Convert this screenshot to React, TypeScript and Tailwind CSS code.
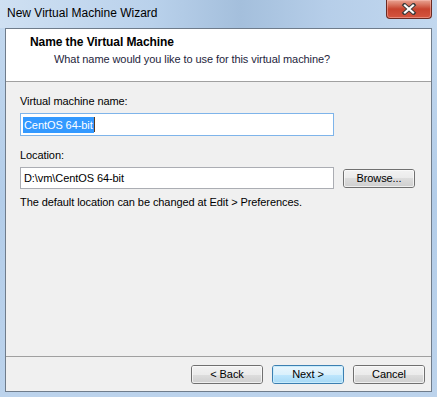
import React from "react";

const ui = { fontFamily: '"Liberation Sans", Arial, sans-serif' };

function WinButton({ label, focused }: { label: string; focused?: boolean }) {
  return (
    <div
      className={`relative w-[72px] h-[19px] rounded-[3px] border flex items-center justify-center text-[11px] text-black overflow-hidden ${
        focused ? "border-[#3c7fb1]" : "border-[#707070]"
      }`}
    >
      <div className="absolute inset-0 flex flex-col">
        <div className={`flex-1 ${focused ? "bg-gradient-to-b from-[#eaf6fd] to-[#d9f0fc]" : "bg-gradient-to-b from-[#f2f2f2] to-[#ebebeb]"}`} />
        <div className={`flex-1 ${focused ? "bg-gradient-to-b from-[#bee6fd] to-[#a7d9f5]" : "bg-gradient-to-b from-[#dddddd] to-[#cfcfcf]"}`} />
      </div>
      <div className={`absolute inset-0 rounded-[2px] border ${focused ? "border-[#c8ecfc]" : "border-[#fcfcfc]/70"}`} />
      <span className="relative">{label}</span>
    </div>
  );
}

function CloseButton() {
  return (
    <div className="w-[46px] h-[19px] rounded-b-[4px] border border-t-0 border-[#6b2a22] bg-gradient-to-b from-[#e8a493] via-[#c7432e] to-[#d5553f] flex items-center justify-center shadow-[inset_0_0_0_1px_rgba(255,200,190,0.45)]">
      <svg width="16" height="12" viewBox="0 0 16 12">
        <path d="M3.5 2 L12.5 10 M12.5 2 L3.5 10" stroke="#3b3b3b" strokeWidth="4" strokeLinecap="square" />
        <path d="M4 2.5 L12 9.5 M12 2.5 L4 9.5" stroke="#ffffff" strokeWidth="2.2" strokeLinecap="square" />
      </svg>
    </div>
  );
}

export default function App() {
  return (
    <div
      className="w-[437px] h-[397px] flex flex-col bg-gradient-to-b from-[#c4d9ef] via-[#b3cde9] to-[#bcd3ec]"
      style={ui}
    >
      {/* title bar */}
      <div className="h-[28px] flex items-start bg-[linear-gradient(90deg,#cfe0f2_0%,#b9d1eb_35%,#a4bfdc_55%,#b6cee9_75%,#c2d8ef_100%)]">
        <span className="pl-[7px] pt-[4px] text-[12px] text-black">New Virtual Machine Wizard</span>
        <div className="ml-auto mr-[5px]">
          <CloseButton />
        </div>
      </div>

      {/* client area */}
      <div className="mx-[5px] mb-[5px] flex-1 border border-[#6f7c8b] bg-[#f0f0f0] flex flex-col tracking-[-0.08px]">
        <div className="h-[53px] bg-white border-b border-[#a0a0a0] flex flex-col pt-[6px]">
          <span className="pl-[24px] text-[12px] font-bold text-black leading-[15px]">Name the Virtual Machine</span>
          <span className="pl-[48px] mt-[2px] text-[11px] text-[#1e1e3c] leading-[15px]">
            What name would you like to use for this virtual machine?
          </span>
        </div>

        <div className="flex-1 flex flex-col pl-[14px] pt-[12px] text-[11px] text-black">
          <span className="leading-[15px]">Virtual machine name:</span>
          <div className="mt-[4px] w-[314px] h-[23px] border border-[#7eb4ea] bg-white flex items-center pl-[2px]">
            <span className="bg-[#3399ff] text-white leading-[16px] px-[1px]">CentOS 64-bit</span>
            <span className="w-px h-[15px] bg-[#5a3a20]" />
          </div>

          <span className="mt-[12px] leading-[15px]">Location:</span>
          <div className="mt-[4px] flex items-center gap-[9px]">
            <div className="w-[314px] h-[22px] border border-[#abadb3] bg-white flex items-center pl-[3px]">
              D:\vm\CentOS 64-bit
            </div>
            <WinButton label="Browse..." />
          </div>

          <span className="mt-[6px] leading-[15px]">The default location can be changed at Edit &gt; Preferences.</span>
        </div>

        <div className="h-[35px] border-t border-[#a0a0a0] flex items-start justify-end gap-[9px] pt-[8px] pr-[6px]">
          <WinButton label="< Back" />
          <WinButton label="Next >" focused />
          <WinButton label="Cancel" />
        </div>
      </div>
    </div>
  );
}
